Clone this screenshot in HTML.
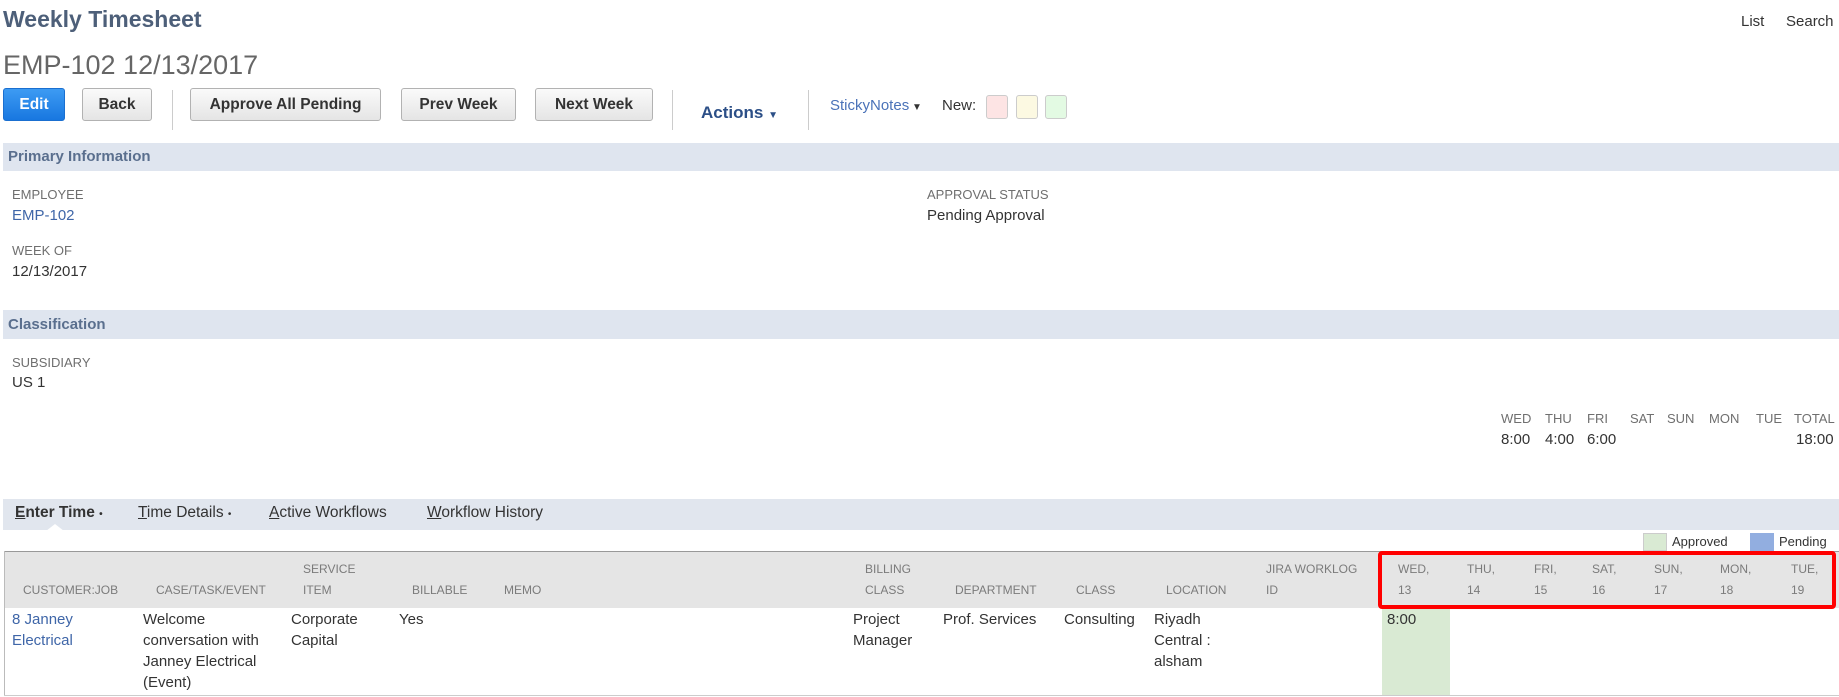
<!DOCTYPE html>
<html><head><meta charset="utf-8"><style>
*{margin:0;padding:0;box-sizing:border-box}
body{width:1839px;height:697px;position:relative;overflow:hidden;background:#fff;font-family:"Liberation Sans",Arial,sans-serif;color:#333}
.a{position:absolute;white-space:nowrap;line-height:1}
.btn{position:absolute;top:88px;height:33px;border:1px solid #b2b2b2;border-radius:3px;background:linear-gradient(#fafafa,#e5e5e5);font-size:15.5px;font-weight:bold;color:#333;display:flex;align-items:center;justify-content:center}
.sep{position:absolute;top:90px;width:1px;height:40px;background:#ccc}
.bar{position:absolute;left:3px;right:0;background:#dfe5ef}
.lbl{font-size:13px;color:#6f6f6f}
.val{font-size:15px;color:#333}
.hd{font-size:12px;color:#7b7b7b}
.dt{font-size:15px;color:#333;line-height:21px;white-space:normal;position:absolute}
</style></head><body>
<div class="a" style="left:3px;top:8px;font-size:23px;font-weight:bold;color:#4d5f79">Weekly Timesheet</div>
<div class="a" style="left:1741px;top:14px;font-size:15px;color:#333">List</div>
<div class="a" style="left:1786px;top:14px;font-size:15px;color:#333">Search</div>
<div class="a" style="left:3px;top:52px;font-size:27px;color:#666">EMP-102 12/13/2017</div>

<div class="btn" style="left:3px;width:62px;background:linear-gradient(#3d9bf3,#1877e0);border-color:#1a6fd0;color:#fff">Edit</div>
<div class="btn" style="left:82px;width:70px">Back</div>
<div class="sep" style="left:172px"></div>
<div class="btn" style="left:190px;width:191px">Approve All Pending</div>
<div class="btn" style="left:401px;width:115px">Prev Week</div>
<div class="btn" style="left:535px;width:118px">Next Week</div>
<div class="sep" style="left:672px"></div>
<div class="a" style="left:701px;top:104px;font-size:17px;font-weight:bold;color:#2c4f87">Actions <span style="font-size:10px">▼</span></div>
<div class="sep" style="left:808px"></div>
<div class="a" style="left:830px;top:98px;font-size:15px;color:#4a72b8">StickyNotes<span style="font-size:10px;color:#333"> ▼</span></div>
<div class="a" style="left:942px;top:98px;font-size:15px;color:#333">New:</div>
<div style="position:absolute;left:986px;top:95px;width:22px;height:24px;background:#fde4e4;border:1px solid #ccc;border-radius:3px"></div>
<div style="position:absolute;left:1016px;top:95px;width:22px;height:24px;background:#fcf9e2;border:1px solid #ccc;border-radius:3px"></div>
<div style="position:absolute;left:1045px;top:95px;width:22px;height:24px;background:#e3fae3;border:1px solid #ccc;border-radius:3px"></div>

<div class="bar" style="top:143px;height:28px"></div>
<div class="a" style="left:8px;top:149px;font-size:15px;font-weight:bold;color:#5a6f8e">Primary Information</div>
<div class="a lbl" style="left:12px;top:188px">EMPLOYEE</div>
<div class="a val" style="left:12px;top:208px;color:#3f66a8">EMP-102</div>
<div class="a lbl" style="left:927px;top:188px">APPROVAL STATUS</div>
<div class="a val" style="left:927px;top:208px">Pending Approval</div>
<div class="a lbl" style="left:12px;top:244px">WEEK OF</div>
<div class="a val" style="left:12px;top:264px">12/13/2017</div>

<div class="bar" style="top:310px;height:29px"></div>
<div class="a" style="left:8px;top:317px;font-size:15px;font-weight:bold;color:#5a6f8e">Classification</div>
<div class="a lbl" style="left:12px;top:356px">SUBSIDIARY</div>
<div class="a val" style="left:12px;top:375px">US 1</div>

<div class="a lbl" style="left:1501px;top:412px">WED</div>
<div class="a lbl" style="left:1545px;top:412px">THU</div>
<div class="a lbl" style="left:1587px;top:412px">FRI</div>
<div class="a lbl" style="left:1630px;top:412px">SAT</div>
<div class="a lbl" style="left:1667px;top:412px">SUN</div>
<div class="a lbl" style="left:1709px;top:412px">MON</div>
<div class="a lbl" style="left:1756px;top:412px">TUE</div>
<div class="a lbl" style="left:1794px;top:412px">TOTAL</div>
<div class="a val" style="left:1501px;top:432px">8:00</div>
<div class="a val" style="left:1545px;top:432px">4:00</div>
<div class="a val" style="left:1587px;top:432px">6:00</div>
<div class="a val" style="left:1796px;top:432px">18:00</div>

<div class="bar" style="top:499px;height:31px;background:#e1e6ee"></div>
<div style="position:absolute;left:46px;top:524px;width:0;height:0;border-left:9px solid transparent;border-right:9px solid transparent;border-bottom:7px solid #fff"></div>
<div class="a" style="left:15px;top:505px;font-size:15.5px;font-weight:bold;color:#333"><u>E</u>nter Time <span style="font-size:10px">•</span></div>
<div class="a" style="left:138px;top:505px;font-size:15.5px;color:#333"><u>T</u>ime Details <span style="font-size:10px">•</span></div>
<div class="a" style="left:269px;top:505px;font-size:15.5px;color:#333"><u>A</u>ctive Workflows</div>
<div class="a" style="left:427px;top:505px;font-size:15.5px;color:#333"><u>W</u>orkflow History</div>

<div style="position:absolute;left:1643px;top:533px;width:24px;height:18px;background:#d9ead3;border:1px solid #ccc"></div>
<div class="a" style="left:1672px;top:535px;font-size:13px;color:#333">Approved</div>
<div style="position:absolute;left:1750px;top:533px;width:24px;height:18px;background:#92aee0"></div>
<div class="a" style="left:1779px;top:535px;font-size:13px;color:#333">Pending</div>

<div style="position:absolute;left:4px;top:551px;width:1835px;height:57px;background:#e5e5e5;border-top:1px solid #999"></div>
<div style="position:absolute;left:4px;top:551px;width:1px;height:145px;background:#bbb"></div>
<div class="a hd" style="left:23px;top:584px">CUSTOMER:JOB</div>
<div class="a hd" style="left:156px;top:584px">CASE/TASK/EVENT</div>
<div class="a hd" style="left:303px;top:563px">SERVICE</div>
<div class="a hd" style="left:303px;top:584px">ITEM</div>
<div class="a hd" style="left:412px;top:584px">BILLABLE</div>
<div class="a hd" style="left:504px;top:584px">MEMO</div>
<div class="a hd" style="left:865px;top:563px">BILLING</div>
<div class="a hd" style="left:865px;top:584px">CLASS</div>
<div class="a hd" style="left:955px;top:584px">DEPARTMENT</div>
<div class="a hd" style="left:1076px;top:584px">CLASS</div>
<div class="a hd" style="left:1166px;top:584px">LOCATION</div>
<div class="a hd" style="left:1266px;top:563px">JIRA WORKLOG</div>
<div class="a hd" style="left:1266px;top:584px">ID</div>
<div class="a hd" style="left:1398px;top:563px">WED,</div><div class="a hd" style="left:1398px;top:584px">13</div>
<div class="a hd" style="left:1467px;top:563px">THU,</div><div class="a hd" style="left:1467px;top:584px">14</div>
<div class="a hd" style="left:1534px;top:563px">FRI,</div><div class="a hd" style="left:1534px;top:584px">15</div>
<div class="a hd" style="left:1592px;top:563px">SAT,</div><div class="a hd" style="left:1592px;top:584px">16</div>
<div class="a hd" style="left:1654px;top:563px">SUN,</div><div class="a hd" style="left:1654px;top:584px">17</div>
<div class="a hd" style="left:1720px;top:563px">MON,</div><div class="a hd" style="left:1720px;top:584px">18</div>
<div class="a hd" style="left:1791px;top:563px">TUE,</div><div class="a hd" style="left:1791px;top:584px">19</div>
<div style="position:absolute;left:1378px;top:551px;width:458px;height:58px;border:4px solid #f00;border-radius:4px"></div>

<div style="position:absolute;left:1382px;top:609px;width:68px;height:86px;background:#d9ead3"></div>
<div class="dt" style="left:12px;top:609px;color:#3f66a8">8 Janney<br>Electrical</div>
<div class="dt" style="left:143px;top:609px">Welcome<br>conversation with<br>Janney Electrical<br>(Event)</div>
<div class="dt" style="left:291px;top:609px">Corporate<br>Capital</div>
<div class="dt" style="left:399px;top:609px">Yes</div>
<div class="dt" style="left:853px;top:609px">Project<br>Manager</div>
<div class="dt" style="left:943px;top:609px">Prof. Services</div>
<div class="dt" style="left:1064px;top:609px">Consulting</div>
<div class="dt" style="left:1154px;top:609px">Riyadh<br>Central :<br>alsham</div>
<div class="dt" style="left:1387px;top:609px">8:00</div>
<div style="position:absolute;left:4px;top:695px;width:1835px;height:1px;background:#ccc"></div>
</body></html>
